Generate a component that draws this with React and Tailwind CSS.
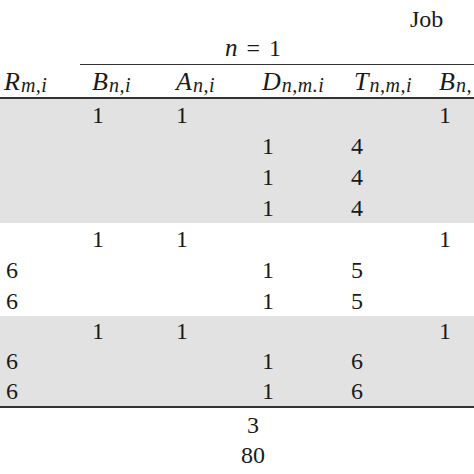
import React from 'react';

const cols = 'grid grid-cols-[87px_84px_86px_89px_88px_40px]';

// italic math symbol with a subscript, e.g. B_{n,i}
const Sym = ({ b, s }) => (
    <span className="italic text-[26px]">
        {b}
        <sub className="text-[20px] tracking-[0.5px] align-baseline relative top-[2px] ml-[1px]">{s}</sub>
    </span>
);

const blocks = [
    {
        gray: true,
        h: 'h-[31px]',
        rows: [
            ['', '1', '1', '', '', '1'],
            ['', '', '', '1', '4', ''],
            ['', '', '', '1', '4', ''],
            ['', '', '', '1', '4', ''],
        ],
    },
    {
        gray: false,
        h: 'h-[31px]',
        rows: [
            ['', '1', '1', '', '', '1'],
            ['6', '', '', '1', '5', ''],
            ['6', '', '', '1', '5', ''],
        ],
    },
    {
        gray: true,
        h: 'h-[30px]',
        rows: [
            ['', '1', '1', '', '', '1'],
            ['6', '', '', '1', '6', ''],
            ['6', '', '', '1', '6', ''],
        ],
    },
];

const App = () => {
    return (
        <div className="w-[474px] h-[474px] overflow-hidden bg-white text-[#1a1a1a] font-['Liberation_Serif',serif] text-[24px] leading-none">
            {/* Job caption */}
            <div className="h-[35px] flex items-center pl-[410px] pt-[2px]">Job</div>

            {/* n = 1 spanner */}
            <div className="h-[30px] pl-[80px]">
                <div className="h-full border-b-[1.5px] border-[#333] flex items-center justify-center pr-[48px] pb-[4px]">
                    <span className="italic text-[25px]">n</span>
                    <span className="mx-[9px]">=</span>
                    <span>1</span>
                </div>
            </div>

            {/* Column headers */}
            <div className={`${cols} h-[34px] items-center border-b-2 border-[#333] whitespace-nowrap pt-[2px]`}>
                <div className="pl-[4px]"><Sym b="R" s="m,i" /></div>
                <div className="pl-[5px]"><Sym b="B" s="n,i" /></div>
                <div className="pl-[5px]"><Sym b="A" s="n,i" /></div>
                <div className="pl-[5px]"><Sym b="D" s="n,m.i" /></div>
                <div className="pl-[8px]"><Sym b="T" s="n,m,i" /></div>
                <div className="pl-[5px]"><Sym b="B" s="n," /></div>
            </div>

            {/* Body */}
            {blocks.map((blk, bi) => (
                <div key={bi} className={blk.gray ? 'bg-[#e2e2e2]' : 'bg-white'}>
                    {blk.rows.map((r, ri) => (
                        <div key={ri} className={`${cols} ${blk.h} items-center`}>
                            {r.map((c, ci) => (
                                <div key={ci} className={ci === 0 ? 'pl-[6px]' : 'pl-[5px]'}>{c}</div>
                            ))}
                        </div>
                    ))}
                </div>
            ))}

            {/* Footer */}
            <div className="border-t-2 border-[#333] flex flex-col items-center pl-[32px]">
                <div className="h-[30px] flex items-center pt-[3px]">3</div>
                <div className="h-[30px] flex items-center pt-[3px]">80</div>
            </div>
        </div>
    );
};

export default App;
